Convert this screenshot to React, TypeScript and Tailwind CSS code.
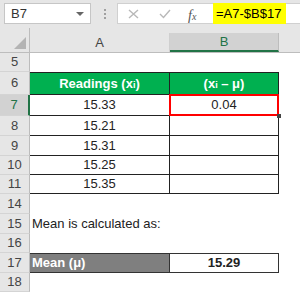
import React from "react";

const font = { fontFamily: '"Liberation Sans", Arial, sans-serif' };

function RowHdr({ n, sel }: { n: string; sel?: boolean }) {
  return (
    <div
      className={
        "w-[30px] shrink-0 flex items-center justify-center text-[13px] border-b border-[#d4d4d4] " +
        (sel
          ? "bg-[#d2d2d2] text-[#217346] border-r-2 border-r-[#217346]"
          : "bg-[#e6e6e6] text-[#444] border-r border-r-[#bcbcbc]")
      }
    >
      {n}
    </div>
  );
}

export default function App() {
  return (
    <div className="w-[300px] h-[292px] overflow-hidden bg-white text-[#222]" style={font}>
      {/* toolbar */}
      <div className="h-[28px] bg-[#e6e6e6] flex items-start pt-[3px]">
        <div className="ml-[4px] w-[87px] h-[21px] bg-white border border-[#c6c6c6] flex items-center pl-[6px] text-[13px] text-[#333] relative">
          B7
          <div className="absolute right-[6px] top-[8px] w-0 h-0 border-l-[4px] border-r-[4px] border-t-[4px] border-l-transparent border-r-transparent border-t-[#666]" />
        </div>
        <div className="ml-[12px] w-[3px] h-[21px] flex flex-col items-center justify-center gap-[2px]">
          <div className="w-[2px] h-[2px] bg-[#a0a0a0]" />
          <div className="w-[2px] h-[2px] bg-[#a0a0a0]" />
          <div className="w-[2px] h-[2px] bg-[#a0a0a0]" />
        </div>
        <div className="ml-[11px] flex-1 h-[21px] bg-white border-y border-l border-[#d0d0d0] flex items-center relative">
          <svg className="absolute left-[10px] top-[5px]" width="11" height="10" viewBox="0 0 11 10">
            <path d="M1 1 L10 9 M10 1 L1 9" stroke="#b8b8b8" strokeWidth="1.4" fill="none" />
          </svg>
          <svg className="absolute left-[41px] top-[5px]" width="12" height="10" viewBox="0 0 12 10">
            <path d="M1 5 L4.5 8.5 L11 1" stroke="#b8b8b8" strokeWidth="1.4" fill="none" />
          </svg>
          <div
            className="absolute left-[70px] top-[1px] text-[14px] italic text-[#555]"
            style={{ fontFamily: '"Liberation Serif", "Times New Roman", serif' }}
          >
            f<span className="text-[10px]">x</span>
          </div>
          <div className="absolute left-[95px] top-[-1px] w-[73px] h-[21px] bg-[#ffff00] flex items-center pl-[3px] text-[13px] text-black">
            =A7-$B$17
          </div>
        </div>
      </div>

      {/* column headers */}
      <div className="h-[25px] flex bg-[#e6e6e6] border-b border-[#bdbdbd]">
        <div className="w-[30px] shrink-0 border-r border-[#bcbcbc] relative">
          <svg className="absolute left-[14px] top-[9px]" width="12" height="12" viewBox="0 0 12 12">
            <path d="M12 0 L12 12 L0 12 Z" fill="#b4b4b4" />
          </svg>
        </div>
        <div className="w-[140px] shrink-0 flex items-end">
          <div className="h-[19px] w-full flex items-center justify-center text-[13px] text-[#444] border-r border-[#cfcfcf]">
            A
          </div>
        </div>
        <div className="w-[109px] shrink-0 flex items-end">
          <div className="h-[19px] w-full flex items-center justify-center text-[13px] text-[#217346] bg-[#d2d2d2] border-b-2 border-[#217346] border-r border-r-[#bdbdbd]">
            B
          </div>
        </div>
        <div className="flex-1" />
      </div>

      {/* row 5 */}
      <div className="h-[19px] flex">
        <RowHdr n="5" />
        <div className="flex-1" />
      </div>

      {/* row 6 */}
      <div className="h-[23px] flex">
        <RowHdr n="6" />
        <div className="w-[140px] shrink-0 bg-[#00b050] border-y border-r border-[#222] flex items-center justify-center text-white font-bold text-[13px]">
          Readings (x<sub className="text-[9px] relative top-[1px]">i</sub>)
        </div>
        <div className="w-[109px] shrink-0 bg-[#00b050] border-y border-r border-[#222] flex items-center justify-center text-white font-bold text-[13px]">
          (x<sub className="text-[9px] relative top-[1px]">i</sub>&nbsp;– μ)
        </div>
        <div className="flex-1" />
      </div>

      {/* row 7 */}
      <div className="h-[21px] flex">
        <RowHdr n="7" sel />
        <div className="w-[140px] shrink-0 border-b border-r border-[#222] flex items-center justify-center text-[13px]">
          15.33
        </div>
        <div className="w-[109px] shrink-0 border-b border-r border-[#222] flex items-center justify-center text-[13px] relative">
          0.04
          <div className="absolute left-[-1px] top-[-1px] right-[-1px] bottom-[-1px] border-2 border-[#ff0000]" />
          <div className="absolute right-[-3px] bottom-[-3px] w-[4px] h-[4px] bg-[#444]" />
        </div>
        <div className="flex-1" />
      </div>

      {[
        ["8", "15.21", 20],
        ["9", "15.31", 20],
        ["10", "15.25", 19],
        ["11", "15.35", 19],
      ].map(([n, v, h]) => (
        <div key={n as string} className="flex" style={{ height: h as number }}>
          <RowHdr n={n as string} />
          <div className="w-[140px] shrink-0 border-b border-r border-[#222] flex items-center justify-center text-[13px]">
            {v}
          </div>
          <div className="w-[109px] shrink-0 border-b border-r border-[#222]" />
          <div className="flex-1" />
        </div>
      ))}

      {/* row 14 */}
      <div className="h-[20px] flex">
        <RowHdr n="14" />
        <div className="flex-1" />
      </div>
      {/* row 15 */}
      <div className="h-[20px] flex">
        <RowHdr n="15" />
        <div className="flex-1 flex items-center pl-[2px] text-[13px] whitespace-nowrap">
          Mean is calculated as:
        </div>
      </div>
      {/* row 16 */}
      <div className="h-[19px] flex">
        <RowHdr n="16" />
        <div className="flex-1" />
      </div>
      {/* row 17 */}
      <div className="h-[20px] flex">
        <RowHdr n="17" />
        <div className="w-[140px] shrink-0 bg-[#7f7f7f] border-y border-r border-[#333] flex items-center pl-[2px] text-white font-bold text-[13px]">
          Mean (μ)
        </div>
        <div className="w-[109px] shrink-0 border-y border-r border-[#333] flex items-center justify-center font-bold text-[13px]">
          15.29
        </div>
        <div className="flex-1" />
      </div>
      {/* row 18 */}
      <div className="h-[19px] flex">
        <RowHdr n="18" />
        <div className="flex-1" />
      </div>
    </div>
  );
}
